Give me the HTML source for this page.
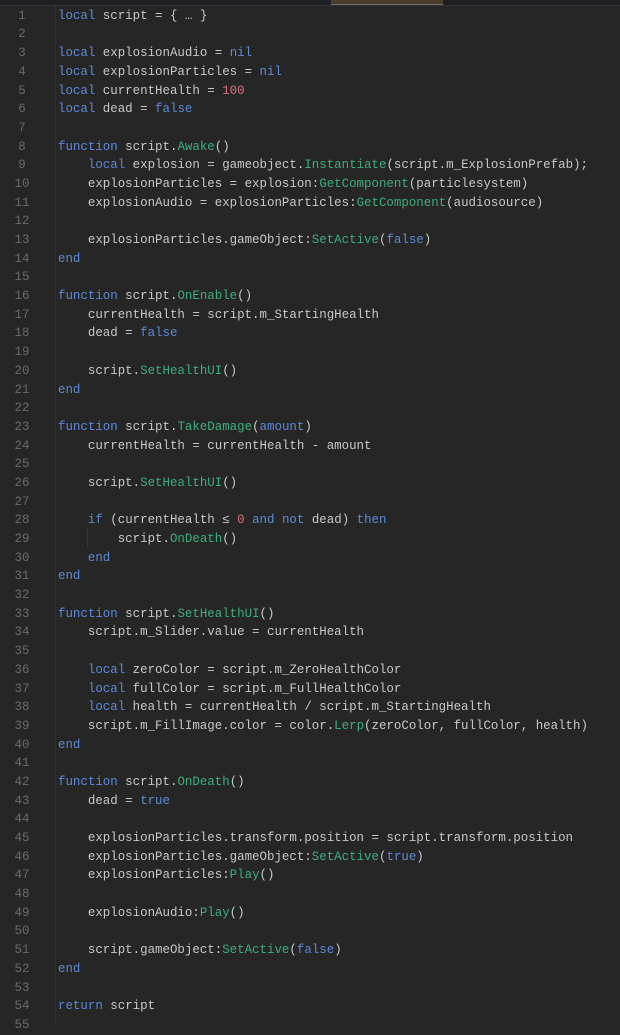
<!DOCTYPE html>
<html><head><style>
html,body{margin:0;padding:0;background:#262626;width:620px;height:1024px;overflow:hidden}
.top{position:absolute;left:0;top:0;width:620px;height:5px;background:#1e1f22;border-bottom:1px solid #333}
.tab{position:absolute;left:331px;top:0;width:112px;height:4px;background:#4a3d2a;border-bottom:1px solid #6a6a70}
.g{position:absolute;left:55px;top:6px;width:1px;height:1018px;background:#333}
pre{position:absolute;top:6.8px;margin:0;font-family:"Liberation Mono",monospace;font-size:12.45px;line-height:18.68px;color:#c8c8c8}
.n{left:0;width:44px;text-align:center;color:#6a6a6a}
.c{left:58px}
.k{color:#5e8ad6}.f{color:#3fad7c}.m{color:#d9727a}
.ig{position:absolute;left:87px;top:529px;width:1px;height:18px;background:#3a3a3a}
</style></head><body>
<div class="top"></div><div class="tab"></div><div class="g"></div><div class="ig"></div>
<pre class="n">1
2
3
4
5
6
7
8
9
10
11
12
13
14
15
16
17
18
19
20
21
22
23
24
25
26
27
28
29
30
31
32
33
34
35
36
37
38
39
40
41
42
43
44
45
46
47
48
49
50
51
52
53
54
55</pre>
<pre class="c"><span class="k">local</span> script = { … }

<span class="k">local</span> explosionAudio = <span class="k">nil</span>
<span class="k">local</span> explosionParticles = <span class="k">nil</span>
<span class="k">local</span> currentHealth = <span class="m">100</span>
<span class="k">local</span> dead = <span class="k">false</span>

<span class="k">function</span> script.<span class="f">Awake</span>()
    <span class="k">local</span> explosion = gameobject.<span class="f">Instantiate</span>(script.m_ExplosionPrefab);
    explosionParticles = explosion:<span class="f">GetComponent</span>(particlesystem)
    explosionAudio = explosionParticles:<span class="f">GetComponent</span>(audiosource)

    explosionParticles.gameObject:<span class="f">SetActive</span>(<span class="k">false</span>)
<span class="k">end</span>

<span class="k">function</span> script.<span class="f">OnEnable</span>()
    currentHealth = script.m_StartingHealth
    dead = <span class="k">false</span>

    script.<span class="f">SetHealthUI</span>()
<span class="k">end</span>

<span class="k">function</span> script.<span class="f">TakeDamage</span>(<span class="k">amount</span>)
    currentHealth = currentHealth - amount

    script.<span class="f">SetHealthUI</span>()

    <span class="k">if</span> (currentHealth ≤ <span class="m">0</span> <span class="k">and</span> <span class="k">not</span> dead) <span class="k">then</span>
        script.<span class="f">OnDeath</span>()
    <span class="k">end</span>
<span class="k">end</span>

<span class="k">function</span> script.<span class="f">SetHealthUI</span>()
    script.m_Slider.value = currentHealth

    <span class="k">local</span> zeroColor = script.m_ZeroHealthColor
    <span class="k">local</span> fullColor = script.m_FullHealthColor
    <span class="k">local</span> health = currentHealth / script.m_StartingHealth
    script.m_FillImage.color = color.<span class="f">Lerp</span>(zeroColor, fullColor, health)
<span class="k">end</span>

<span class="k">function</span> script.<span class="f">OnDeath</span>()
    dead = <span class="k">true</span>

    explosionParticles.transform.position = script.transform.position
    explosionParticles.gameObject:<span class="f">SetActive</span>(<span class="k">true</span>)
    explosionParticles:<span class="f">Play</span>()

    explosionAudio:<span class="f">Play</span>()

    script.gameObject:<span class="f">SetActive</span>(<span class="k">false</span>)
<span class="k">end</span>

<span class="k">return</span> script
</pre>
</body></html>
